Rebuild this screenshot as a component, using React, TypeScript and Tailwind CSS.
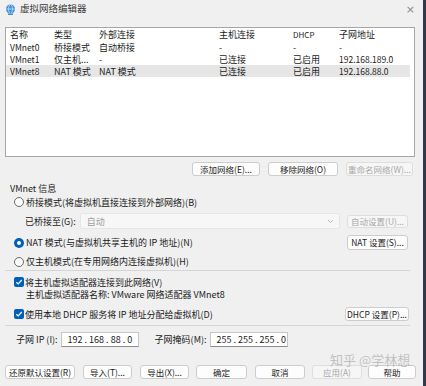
import React from "react";

const Btn = ({ w, label, disabled, h = "h-[14px]", cls = "" }: { w: string; label: string; disabled?: boolean; h?: string; cls?: string }) => (
  <div
    className={`${w} ${h} ${cls} shrink-0 flex items-center justify-center rounded-[3px] border text-[8.5px] leading-none whitespace-nowrap overflow-hidden ${
      disabled ? "border-[#dedede] bg-[#f6f6f6] text-[#a8a8a8]" : "border-[#cdcdcd] bg-[#fdfdfd] text-[#1b1b1b]"
    }`}
  >
    {label}
  </div>
);

const Radio = ({ on }: { on?: boolean }) =>
  on ? (
    <div className="w-[10px] h-[10px] rounded-full bg-[#005fb8] flex items-center justify-center shrink-0">
      <div className="w-[4px] h-[4px] rounded-full bg-white" />
    </div>
  ) : (
    <div className="w-[10px] h-[10px] rounded-full border border-[#6a6a6a] bg-[#fbfbfb] shrink-0" />
  );

const Check = () => (
  <div className="w-[10px] h-[10px] rounded-[2px] bg-[#005fb8] flex items-center justify-center shrink-0">
    <svg width="8" height="8" viewBox="0 0 8 8">
      <path d="M1.3 4.2 L3.2 6 L6.8 2" fill="none" stroke="white" strokeWidth="1.2" />
    </svg>
  </div>
);

const Ip = ({ parts }: { parts: string[] }) => (
  <div className="w-[78px] h-[15px] shrink-0 bg-white border border-[#c6c6c6] border-b-[#8c8c8c] flex items-center pl-[6px] text-[9px] leading-none text-[#1b1b1b] whitespace-pre">
    {parts.join(" . ")}
  </div>
);

const cols = "grid grid-cols-[44px_45px_120px_74px_46px_1fr] items-center pl-[4px]";

export default function App() {
  const rows = [
    ["VMnet0", "桥接模式", "自动桥接", "-", "-", "-"],
    ["VMnet1", "仅主机...", "-", "已连接", "已启用", "192.168.189.0"],
    ["VMnet8", "NAT 模式", "NAT 模式", "已连接", "已启用", "192.168.88.0"],
  ];
  return (
    <div className="w-[426px] h-[386px] flex overflow-hidden bg-[#2f3b48] font-['Noto_Sans_CJK_SC',sans-serif] whitespace-nowrap">
      <div className="relative w-[423px] h-full bg-[#f0f0f0] flex flex-col text-[9px] leading-none text-[#1b1b1b]">
        {/* title bar */}
        <div className="h-[17px] flex items-center pl-[5px] pt-[1px]">
          <svg width="11" height="11" viewBox="0 0 11 11">
            <circle cx="5.5" cy="5" r="4.5" fill="#3d8fd8" />
            <ellipse cx="5.5" cy="5" rx="2" ry="4.5" fill="none" stroke="#bfe0fb" strokeWidth="0.8" />
            <line x1="1" y1="5" x2="10" y2="5" stroke="#bfe0fb" strokeWidth="0.8" />
            <rect x="3" y="9.6" width="5" height="1.2" fill="#2a6fb0" />
          </svg>
          <span className="ml-[4px] text-[9.5px] text-[#3a3a3a]">虚拟网络编辑器</span>
          <span className="ml-auto mr-[8px] text-[11px] text-[#8a8a8a] font-['DejaVu_Sans',sans-serif]">×</span>
        </div>

        {/* list */}
        <div className="mt-[10px] ml-[5px] w-[410px] h-[130px] border border-[#a6a6a6] bg-white">
          <div className={`${cols} h-[13px] text-[#1b1b1b]`}>
            <span>名称</span>
            <span>类型</span>
            <span>外部连接</span>
            <span>主机连接</span>
            <span className="text-[8px]">DHCP</span>
            <span>子网地址</span>
          </div>
          {rows.map((r, i) => (
            <div key={i} className={`${cols} h-[12px] mr-[4px] ${i === 2 ? "bg-[#e6e6e6]" : ""}`}>
              {r.map((c, j) => (
                <span key={j} className={j === 0 || j === 5 ? "text-[8.5px]" : ""}>
                  {c}
                </span>
              ))}
            </div>
          ))}
        </div>

        {/* list buttons */}
        <div className="mt-[5px] flex justify-end pr-[10px] gap-[8px]">
          <Btn w="w-[68px]" label="添加网络(E)..." />
          <Btn w="w-[70px]" label="移除网络(O)" />
          <Btn w="w-[67px]" label="重命名网络(W)..." disabled />
        </div>

        {/* VMnet info */}
        <div className="mt-[6px] h-[13px] flex items-center pl-[10px]">VMnet 信息</div>

        <div className="h-[14px] flex items-center pl-[14px] gap-[2px]">
          <Radio />
          <span>桥接模式(将虚拟机直接连接到外部网络)(B)</span>
        </div>

        <div className="mt-[4px] h-[16px] flex items-center pl-[25px]">
          <span className="shrink-0 mr-[4px]">已桥接至(G):</span>
          <div className="flex-1 h-[16px] bg-[#f7f7f7] border border-[#e6e6e6] rounded-[2px] flex items-center pl-[6px] pr-[5px] text-[#a0a0a0]">
            <span>自动</span>
            <svg className="ml-auto" width="7" height="5" viewBox="0 0 7 5">
              <path d="M1 1 L3.5 3.5 L6 1" fill="none" stroke="#b0b0b0" strokeWidth="0.9" />
            </svg>
          </div>
          <Btn w="w-[61px]" h="h-[13px]" cls="ml-[7px] mr-[15px]" label="自动设置(U)..." disabled />
        </div>

        <div className="mt-[6px] h-[15px] flex items-center pl-[14px] pr-[15px] gap-[2px]">
          <Radio on />
          <span>NAT 模式(与虚拟机共享主机的 IP 地址)(N)</span>
          <Btn w="w-[61px]" h="h-[15px]" cls="ml-auto" label="NAT 设置(S)..." />
        </div>

        <div className="mt-[5px] h-[13px] flex items-center pl-[14px] gap-[2px]">
          <Radio />
          <span>仅主机模式(在专用网络内连接虚拟机)(H)</span>
        </div>

        <div className="mt-[2px] ml-[5px] w-[405px] h-px bg-[#d6d6d6]" />

        <div className="mt-[5px] h-[12px] flex items-center pl-[14px] gap-[1px]">
          <Check />
          <span>将主机虚拟适配器连接到此网络(V)</span>
        </div>
        <div className="h-[13px] flex items-center pl-[26px]">主机虚拟适配器名称: VMware 网络适配器 VMnet8</div>

        <div className="mt-[6px] h-[14px] flex items-center pl-[14px] pr-[14px] gap-[1px]">
          <Check />
          <span>使用本地 DHCP 服务将 IP 地址分配给虚拟机(D)</span>
          <Btn w="w-[64px]" h="h-[14px]" cls="ml-auto" label="DHCP 设置(P)..." />
        </div>

        <div className="mt-[4px] ml-[5px] w-[405px] h-px bg-[#d6d6d6]" />

        <div className="mt-[6px] h-[15px] flex items-center pl-[16px]">
          <span className="shrink-0 mr-[3px]">子网 IP (I):</span>
          <Ip parts={["192", "168", "88", "0"]} />
          <span className="shrink-0 ml-[16px] mr-[3px]">子网掩码(M):</span>
          <Ip parts={["255", "255", "255", "0"]} />
        </div>

        <div className="mt-[18px] h-[14px] flex items-center">
          <Btn w="w-[70px]" cls="ml-[5px]" label="还原默认设置(R)" />
          <Btn w="w-[49px]" cls="ml-[8px]" label="导入(T)..." />
          <Btn w="w-[49px]" cls="ml-[8px]" label="导出(X)..." />
          <Btn w="w-[51px]" cls="ml-[7px]" label="确定" />
          <Btn w="w-[50px]" cls="ml-[8px]" label="取消" />
          <Btn w="w-[50px]" cls="ml-[7px]" label="应用(A)" disabled />
          <Btn w="w-[48px]" cls="ml-[6px]" label="帮助" />
        </div>

        <div className="absolute left-[330px] top-[353px] text-[13px] text-[#a0a0a0]/60 leading-none whitespace-nowrap pointer-events-none">
          知乎 @学林想
        </div>
      </div>
    </div>
  );
}
